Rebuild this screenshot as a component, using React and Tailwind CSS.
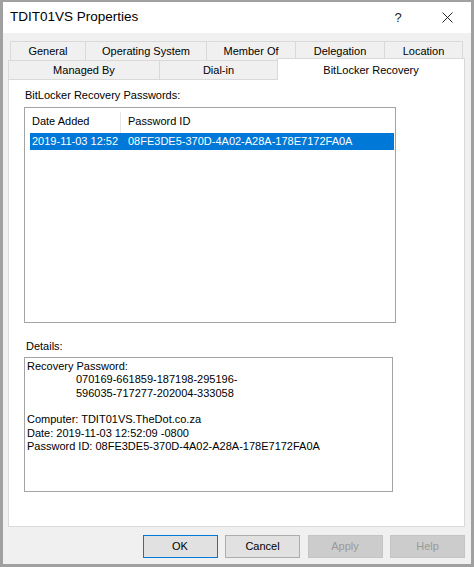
import React from "react";

const font = { fontFamily: '"Liberation Sans", Arial, sans-serif' };

function Tab({ w, children, last }) {
  return (
    <div
      className={`h-[19px] flex items-center justify-center border-t border-l border-[#d9d9d9] bg-[#f0f0f0] text-[11px] text-black ${last ? "border-r" : ""}`}
      style={{ width: w }}
    >
      {children}
    </div>
  );
}

function Btn({ children, kind }) {
  const cls =
    kind === "default"
      ? "bg-[#e1e1e1] border border-[#0078d7] text-black"
      : kind === "disabled"
      ? "bg-[#cccccc] border border-[#c4c4c4] text-[#9a9a9a]"
      : "bg-[#e1e1e1] border border-[#adadad] text-black";
  return (
    <div className={`w-[75px] h-[23px] flex items-center justify-center text-[11px] ${cls}`}>
      {children}
    </div>
  );
}

export default function App() {
  return (
    <div
      className="w-[474px] h-[567px] border-[3px] border-t-[2px] border-[#a0a0a0] flex flex-col bg-white"
      style={font}
    >
      {/* title bar */}
      <div className="h-[31px] bg-white flex items-center pl-[7px] pr-[18px]">
        <div className="text-[13.5px] text-black flex-1">TDIT01VS Properties</div>
        <div className="text-[13px] text-[#222] w-[20px] text-center mr-[34px]">?</div>
        <svg width="11" height="11" viewBox="0 0 11 11">
          <path d="M0.5 0.5 L10.5 10.5 M10.5 0.5 L0.5 10.5" stroke="#111" strokeWidth="0.9" />
        </svg>
      </div>

      {/* body */}
      <div className="flex-1 bg-[#f0f0f0] flex flex-col pt-[8px] pl-[5px] pr-[6px]">
        {/* tab row 1 */}
        <div className="flex pl-[2px]">
          <Tab w={75}>General</Tab>
          <Tab w={121}>Operating System</Tab>
          <Tab w={89}>Member Of</Tab>
          <Tab w={89}>Delegation</Tab>
          <Tab w={79} last>Location</Tab>
        </div>
        {/* tab row 2 */}
        <div className="flex h-[19px]">
          <Tab w={151}>Managed By</Tab>
          <Tab w={118}>Dial-in</Tab>
          <div className="relative z-10 w-[188px] h-[22px] -mt-[2px] bg-white border-t border-l border-r border-[#d9d9d9] flex justify-center pt-[3px] text-[11px] text-black">
            BitLocker Recovery
          </div>
        </div>

        {/* panel */}
        <div className="h-[448px] bg-white border border-[#d9d9d9] pl-[15px] pt-[8px] flex flex-col text-[11px] text-black">
          <div className="ml-[1px] leading-[14px]">BitLocker Recovery Passwords:</div>
          <div className="mt-[5px] w-[372px] h-[216px] border border-[#a3a3a3] flex flex-col">
            <div className="h-[25px] flex items-center">
              <div className="w-[96px] h-[21px] mt-[4px] border-r border-[#e5e5e5] pl-[7px] flex items-start pt-[1px]">
                Date Added
              </div>
              <div className="pl-[7px] pt-[1px]">Password ID</div>
            </div>
            <div className="ml-[5px] mr-[1px] h-[17px] bg-[#0078d7] text-white flex items-center">
              <div className="w-[98px] pl-[2px]">2019-11-03 12:52</div>
              <div>08FE3DE5-370D-4A02-A28A-178E7172FA0A</div>
            </div>
          </div>

          <div className="mt-[16px] ml-[2px] leading-[14px]">Details:</div>
          <div className="mt-[4px] w-[369px] h-[135px] border border-[#a3a3a3] pl-[2px] pt-[2px] leading-[13.33px]">
            <div>Recovery Password:</div>
            <div className="pl-[49px]">070169-661859-187198-295196-</div>
            <div className="pl-[49px]">596035-717277-202004-333058</div>
            <div className="h-[13.33px]"></div>
            <div>Computer: TDIT01VS.TheDot.co.za</div>
            <div>Date: 2019-11-03 12:52:09 -0800</div>
            <div>Password ID: 08FE3DE5-370D-4A02-A28A-178E7172FA0A</div>
          </div>
        </div>

        {/* buttons */}
        <div className="mt-[8px] flex justify-end gap-[7.5px]">
          <Btn kind="default">OK</Btn>
          <Btn>Cancel</Btn>
          <Btn kind="disabled">Apply</Btn>
          <Btn kind="disabled">Help</Btn>
        </div>
      </div>
    </div>
  );
}
